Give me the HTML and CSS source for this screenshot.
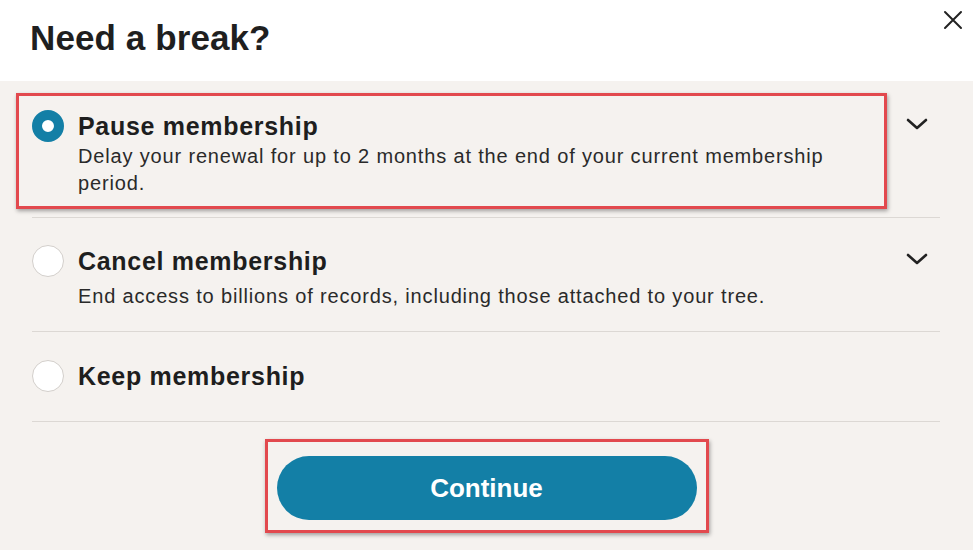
FILE: index.html
```html
<!DOCTYPE html>
<html lang="en">
<head>
<meta charset="utf-8">
<title>Need a break?</title>
<link rel="stylesheet" href="styles.css">
</head>
<body>
<div class="modal">
  <header class="header">
    <h1 class="title">Need a break?</h1>
    <button class="close" aria-label="Close">
      <svg width="20" height="20" viewBox="0 0 20 20"><path d="M2 2 L18 18 M18 2 L2 18" stroke="#222" stroke-width="2" stroke-linecap="round" fill="none"/></svg>
    </button>
  </header>
  <main class="body">
    <div class="options">
      <div class="option option-first">
        <span class="radio radio-on"></span>
        <div class="text">
          <div class="opt-title">Pause membership</div>
          <div class="opt-desc">Delay your renewal for up to 2 months at the end of your current membership period.</div>
        </div>
        <svg class="chev" width="22" height="12" viewBox="0 0 22 12"><path d="M2 2 L11 10 L20 2" stroke="#222" stroke-width="2.6" fill="none" stroke-linecap="round" stroke-linejoin="round"/></svg>
        <span class="mark mark-option"></span>
      </div>
      <div class="option">
        <span class="radio"></span>
        <div class="text">
          <div class="opt-title">Cancel membership</div>
          <div class="opt-desc opt-desc-spaced">End access to billions of records, including those attached to your tree.</div>
        </div>
        <svg class="chev" width="22" height="12" viewBox="0 0 22 12"><path d="M2 2 L11 10 L20 2" stroke="#222" stroke-width="2.6" fill="none" stroke-linecap="round" stroke-linejoin="round"/></svg>
      </div>
      <div class="option option-last">
        <span class="radio"></span>
        <div class="text">
          <div class="opt-title">Keep membership</div>
        </div>
      </div>
    </div>
    <div class="actions">
      <div class="btn-wrap">
        <button class="continue">Continue</button>
        <span class="mark mark-btn"></span>
      </div>
    </div>
  </main>
</div>
</body>
</html>
```
FILE: styles.css
```css
* { box-sizing: border-box; }
html, body { margin: 0; padding: 0; }
body {
  width: 973px;
  height: 550px;
  overflow: hidden;
  background: #f5f2ef;
  font-family: "Liberation Sans", Arial, sans-serif;
  color: #1e1e1e;
}
.modal { display: flex; flex-direction: column; height: 550px; }
.header {
  height: 81px;
  background: #ffffff;
  display: flex;
  align-items: flex-start;
  justify-content: space-between;
  padding: 18px 10px 0 30px;
}
.title {
  margin: 0;
  font-size: 35px;
  line-height: 40px;
  font-weight: 700;
  letter-spacing: 0.1px;
  color: #1f1f1f;
}
.close {
  border: 0;
  background: transparent;
  padding: 0;
  margin-top: -8px;
  width: 20px;
  height: 20px;
  display: flex;
}
.body { flex: 1; background: #f5f2ef; }
.options { padding: 0 33px 0 32px; }
.option {
  position: relative;
  display: flex;
  align-items: flex-start;
  gap: 14px;
  padding: 28px 0 21px 0;
  border-bottom: 1px solid #dcd8d4;
}
.option-first { padding-top: 30px; padding-bottom: 20px; }
.option-last { padding-top: 29px; padding-bottom: 29px; }
.radio {
  flex: none;
  width: 32px;
  height: 32px;
  border-radius: 50%;
  background: #ffffff;
  border: 1.5px solid #d3cfcb;
  margin-top: -1px;
}
.radio-on {
  background: #ffffff;
  border: 10px solid #137fa6;
}
.text { flex: 1; }
.opt-title {
  font-size: 25px;
  line-height: 30px;
  font-weight: 700;
  letter-spacing: 0.7px;
  color: #1e1e1e;
}
.opt-desc {
  font-size: 20px;
  line-height: 27px;
  letter-spacing: 0.84px;
  color: #2a2a2a;
  padding-right: 40px;
  margin-top: 2px;
}
.opt-desc-spaced { margin-top: 7px; }
.chev { flex: none; margin: 7px 12px 0 0; }
.mark {
  position: absolute;
  border: 3px solid #e2494e;
  box-shadow: 1px 2px 4px rgba(0,0,0,0.35);
  pointer-events: none;
}
.mark-option { left: -16px; top: 12px; width: 871px; height: 116px; }
.actions { display: flex; justify-content: center; padding-top: 34px; }
.btn-wrap { position: relative; }
.continue {
  width: 420px;
  height: 64px;
  border: 0;
  border-radius: 32px;
  background: #137fa6;
  color: #ffffff;
  font-family: "Liberation Sans", Arial, sans-serif;
  font-size: 26px;
  font-weight: 700;
  display: flex;
  align-items: center;
  justify-content: center;
}
.mark-btn { left: -12px; top: -17px; width: 444px; height: 94px; }
```
